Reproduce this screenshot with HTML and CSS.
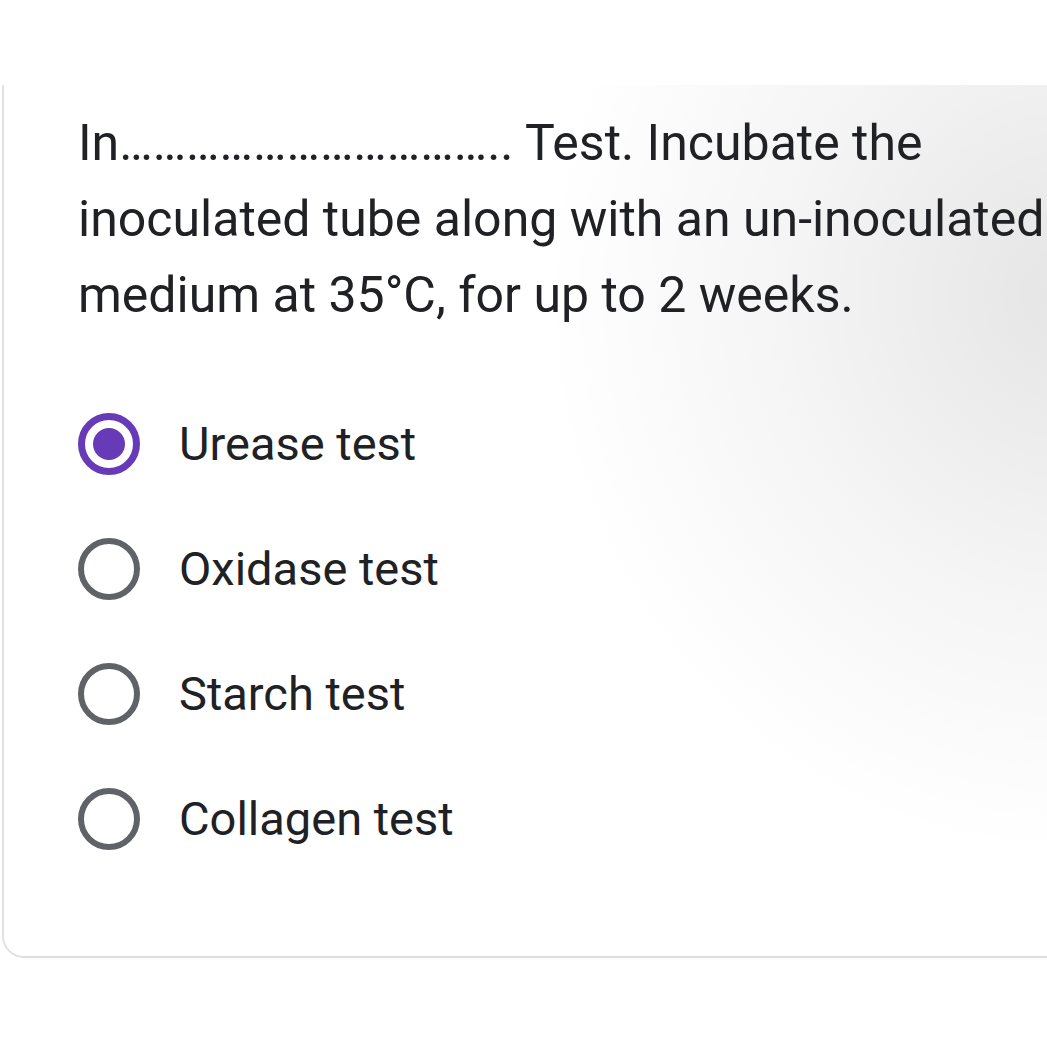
FILE: index.html
```html
<!DOCTYPE html>
<html>
<head>
<meta charset="utf-8">
<link rel="stylesheet" href="styles.css">
</head>
<body>
<div class="page">
  <div class="card">
    <div class="glare"></div>
    <p class="question">In&hellip;&hellip;&hellip;&hellip;&hellip;&hellip;&hellip;&hellip;&hellip;&hellip;&hellip;.. Test. Incubate the<br>inoculated tube along with an un-inoculated<br>medium at 35°C, for up to 2 weeks.</p>
    <div class="options">
      <div class="option">
        <span class="radio checked"><span class="dot"></span></span>
        <span class="label">Urease test</span>
      </div>
      <div class="option">
        <span class="radio"></span>
        <span class="label">Oxidase test</span>
      </div>
      <div class="option">
        <span class="radio"></span>
        <span class="label">Starch test</span>
      </div>
      <div class="option">
        <span class="radio"></span>
        <span class="label">Collagen test</span>
      </div>
    </div>
  </div>
</div>
</body>
</html>
```

FILE: styles.css
```css
html, body {
  margin: 0;
  padding: 0;
  background: #ffffff;
  overflow: hidden;
}

.page {
  width: 1047px;
  height: 1047px;
  padding-top: 85px;
  box-sizing: border-box;
  overflow: hidden;
  font-family: Roboto, "Noto Sans", sans-serif;
  color: #202124;
}

.card {
  position: relative;
  margin-left: 2px;
  width: 1120px;
  border-left: 2px solid #e2e1ea;
  border-bottom: 2px solid #dedde8;
  border-bottom-left-radius: 22px;
  padding: 20px 0 75px 74px;
  box-sizing: border-box;
  background: #ffffff;
}

.glare {
  position: absolute;
  inset: 0;
  pointer-events: none;
  background:
    radial-gradient(ellipse 520px 560px at 1060px 210px, rgba(0,0,0,0.10), rgba(0,0,0,0.04) 55%, rgba(0,0,0,0) 100%);
}

.question {
  position: relative;
  margin: 0;
  font-size: 50px;
  line-height: 76px;
  white-space: nowrap;
  letter-spacing: 0;
}

.options {
  position: relative;
  margin-top: 48px;
  display: flex;
  flex-direction: column;
}

.option {
  height: 125px;
  display: flex;
  align-items: center;
}

.radio {
  width: 62px;
  height: 62px;
  box-sizing: border-box;
  border: 6px solid #5f6368;
  border-radius: 50%;
  display: flex;
  align-items: center;
  justify-content: center;
  flex: none;
}

.radio.checked {
  border: 7px solid #673ab7;
}

.dot {
  width: 32px;
  height: 32px;
  border-radius: 50%;
  background: #673ab7;
}

.label {
  margin-left: 39px;
  font-size: 47px;
  line-height: 55px;
  white-space: nowrap;
}
```
